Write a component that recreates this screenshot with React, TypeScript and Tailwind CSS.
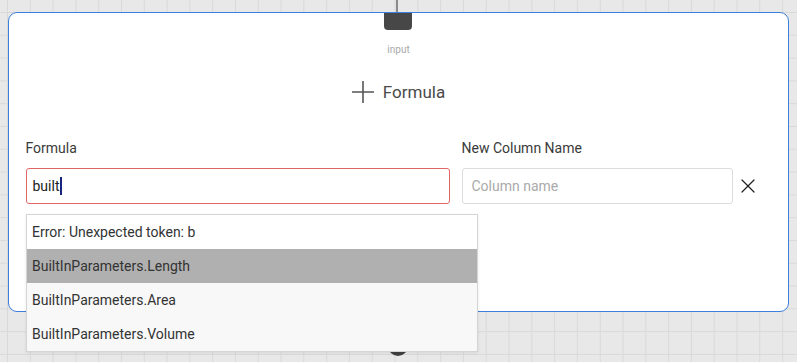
import { X } from "lucide-react";

interface Suggestion {
  id: number;
  label: string;
  active: boolean;
}

const suggestions: Suggestion[] = [
  { id: 1, label: "BuiltInParameters.Length", active: true },
  { id: 2, label: "BuiltInParameters.Area", active: false },
  { id: 3, label: "BuiltInParameters.Volume", active: false },
];

export default function App() {
  return (
    <div
      className="relative h-[362px] w-[797px] overflow-hidden bg-[#e8e8e8] bg-[linear-gradient(#d9d9d9_1px,transparent_1px),linear-gradient(90deg,#d9d9d9_1px,transparent_1px)] bg-[size:22.8px_22.8px] bg-[position:7px_12px] pt-3 pl-2"
      style={{ fontFamily: "Roboto, 'Liberation Sans', sans-serif" }}
    >
      {/* edge coming into the node */}
      <div className="absolute left-[396px] top-0 h-3 w-[2px] bg-[#8a8a8a]" />

      {/* output handle, sits behind the dropdown */}
      <div className="absolute left-[388px] top-[336px] h-5 w-5 rounded-full bg-[#3f3f3f]" />

      <div className="relative flex h-[300px] w-[781px] flex-col items-center rounded-[9px] border-[1.5px] border-[#3d7fdc] bg-white pt-[31px]">
        <div className="absolute left-[375px] top-0 h-[17px] w-[28px] rounded-b-[4px] bg-[#474747]" />

        <span className="text-[10px] leading-3 text-[#a8a8a8]">input</span>

        <div className="mt-[24px] flex items-center gap-[9px] text-[17px] leading-6 text-[#4a4a4a]">
          <svg width="22" height="22" viewBox="0 0 22 22" className="text-[#555]">
            <path d="M11 0V22M0 11H22" stroke="currentColor" strokeWidth="1.6" />
          </svg>
          <span>Formula</span>
        </div>

        <div className="mt-[34px] flex w-full gap-3 pl-[16.5px]">
          <div className="flex w-[424px] flex-col gap-[10px]">
            <label className="text-sm leading-5 text-[#3a3a3a]">Formula</label>
            <div className="flex h-9 items-center rounded-[3px] border border-[#e06666] px-[6px] text-sm text-[#222]">
              built
              <span className="ml-[1px] h-[18px] w-[2px] bg-[#1a237e]" />
            </div>
          </div>
          <div className="flex flex-col gap-[10px]">
            <label className="text-sm leading-5 text-[#3a3a3a]">New Column Name</label>
            <div className="flex items-center gap-[3px]">
              <div className="flex h-9 w-[271px] items-center rounded-[3px] border border-[#dcdcdc] px-[9px] text-sm text-[#aaa]">
                Column name
              </div>
              <X className="h-6 w-6 text-[#222]" strokeWidth={1.2} />
            </div>
          </div>
        </div>
      </div>

      {/* autocomplete popup */}
      <div className="absolute left-[26px] top-[214px] z-10 w-[452px] border border-[#d4d4d4] text-sm text-[#333] shadow-[0_1px_3px_rgba(0,0,0,0.08)]">
        <div className="flex h-[34px] items-center bg-white px-[5px]">Error: Unexpected token: b</div>
        {suggestions.map((s) => (
          <div
            key={s.id}
            className={`flex h-[34px] items-center px-[5px] ${s.active ? "bg-[#b0b0b0]" : "bg-[#f8f8f8]"}`}
          >
            {s.label}
          </div>
        ))}
      </div>
    </div>
  );
}
